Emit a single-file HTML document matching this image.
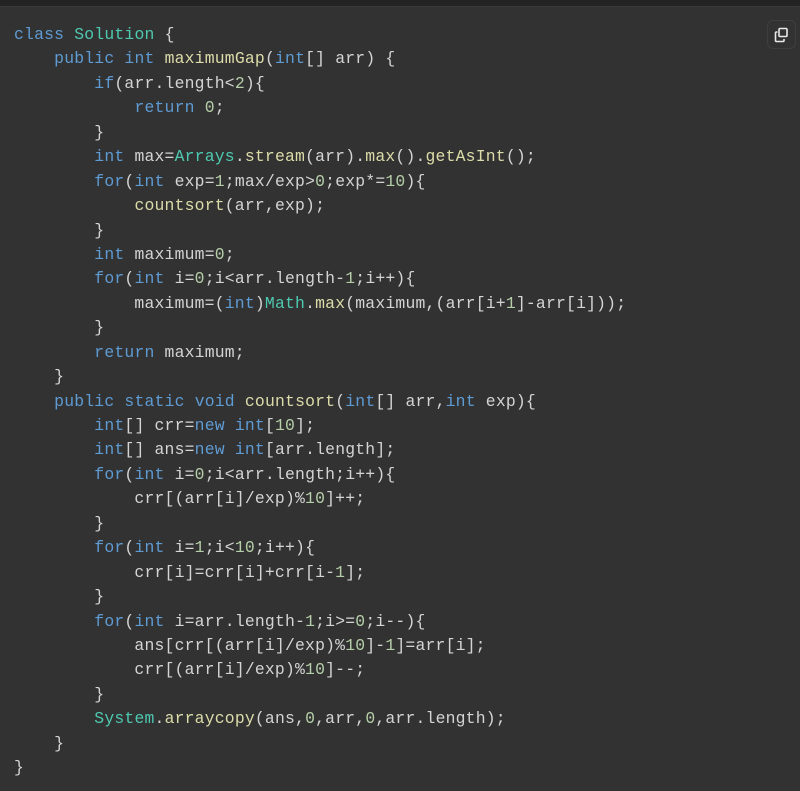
<!DOCTYPE html>
<html><head><meta charset="utf-8"><style>
html,body{margin:0;padding:0;}
body{width:800px;height:791px;background:#323232;position:relative;overflow:hidden;}
.top{position:absolute;left:0;top:0;width:800px;height:6px;background:#232323;border-bottom:1px solid #3a3a3a;}
pre{position:absolute;left:14px;top:23px;margin:0;font-family:"Liberation Mono",monospace;font-size:16.4px;letter-spacing:0.2px;line-height:24.43px;color:#d4d4d4;white-space:pre;}
.k{color:#5f9bd3}.t{color:#4ec9b0}.f{color:#dcdcaa}.n{color:#b5cea8}
.copy{position:absolute;left:767px;top:20px;width:29px;height:29px;border:1px solid #3e3e3e;border-radius:6px;box-sizing:border-box;}
</style></head><body>
<div class="top"></div>
<div class="copy"><svg width="29" height="29" viewBox="0 0 29 29"><rect x="11" y="7.5" width="8" height="8" rx="1" fill="none" stroke="#e8e8e8" stroke-width="1.6"/><path d="M9.5 11 H8.5 a1 1 0 0 0 -1 1 V19.5 a1 1 0 0 0 1 1 H15 a1 1 0 0 0 1 -1 V18" fill="none" stroke="#e8e8e8" stroke-width="1.6"/></svg></div>
<pre><span class="k">class</span> <span class="t">Solution</span> {
    <span class="k">public</span> <span class="k">int</span> <span class="f">maximumGap</span>(<span class="k">int</span>[] arr) {
        <span class="k">if</span>(arr.length&lt;<span class="n">2</span>){
            <span class="k">return</span> <span class="n">0</span>;
        }
        <span class="k">int</span> max=<span class="t">Arrays</span>.<span class="f">stream</span>(arr).<span class="f">max</span>().<span class="f">getAsInt</span>();
        <span class="k">for</span>(<span class="k">int</span> exp=<span class="n">1</span>;max/exp&gt;<span class="n">0</span>;exp*=<span class="n">10</span>){
            <span class="f">countsort</span>(arr,exp);
        }
        <span class="k">int</span> maximum=<span class="n">0</span>;
        <span class="k">for</span>(<span class="k">int</span> i=<span class="n">0</span>;i&lt;arr.length-<span class="n">1</span>;i++){
            maximum=(<span class="k">int</span>)<span class="t">Math</span>.<span class="f">max</span>(maximum,(arr[i+<span class="n">1</span>]-arr[i]));
        }
        <span class="k">return</span> maximum;
    }
    <span class="k">public</span> <span class="k">static</span> <span class="k">void</span> <span class="f">countsort</span>(<span class="k">int</span>[] arr,<span class="k">int</span> exp){
        <span class="k">int</span>[] crr=<span class="k">new</span> <span class="k">int</span>[<span class="n">10</span>];
        <span class="k">int</span>[] ans=<span class="k">new</span> <span class="k">int</span>[arr.length];
        <span class="k">for</span>(<span class="k">int</span> i=<span class="n">0</span>;i&lt;arr.length;i++){
            crr[(arr[i]/exp)%<span class="n">10</span>]++;
        }
        <span class="k">for</span>(<span class="k">int</span> i=<span class="n">1</span>;i&lt;<span class="n">10</span>;i++){
            crr[i]=crr[i]+crr[i-<span class="n">1</span>];
        }
        <span class="k">for</span>(<span class="k">int</span> i=arr.length-<span class="n">1</span>;i&gt;=<span class="n">0</span>;i--){
            ans[crr[(arr[i]/exp)%<span class="n">10</span>]-<span class="n">1</span>]=arr[i];
            crr[(arr[i]/exp)%<span class="n">10</span>]--;
        }
        <span class="t">System</span>.<span class="f">arraycopy</span>(ans,<span class="n">0</span>,arr,<span class="n">0</span>,arr.length);
    }
}</pre>
</body></html>
